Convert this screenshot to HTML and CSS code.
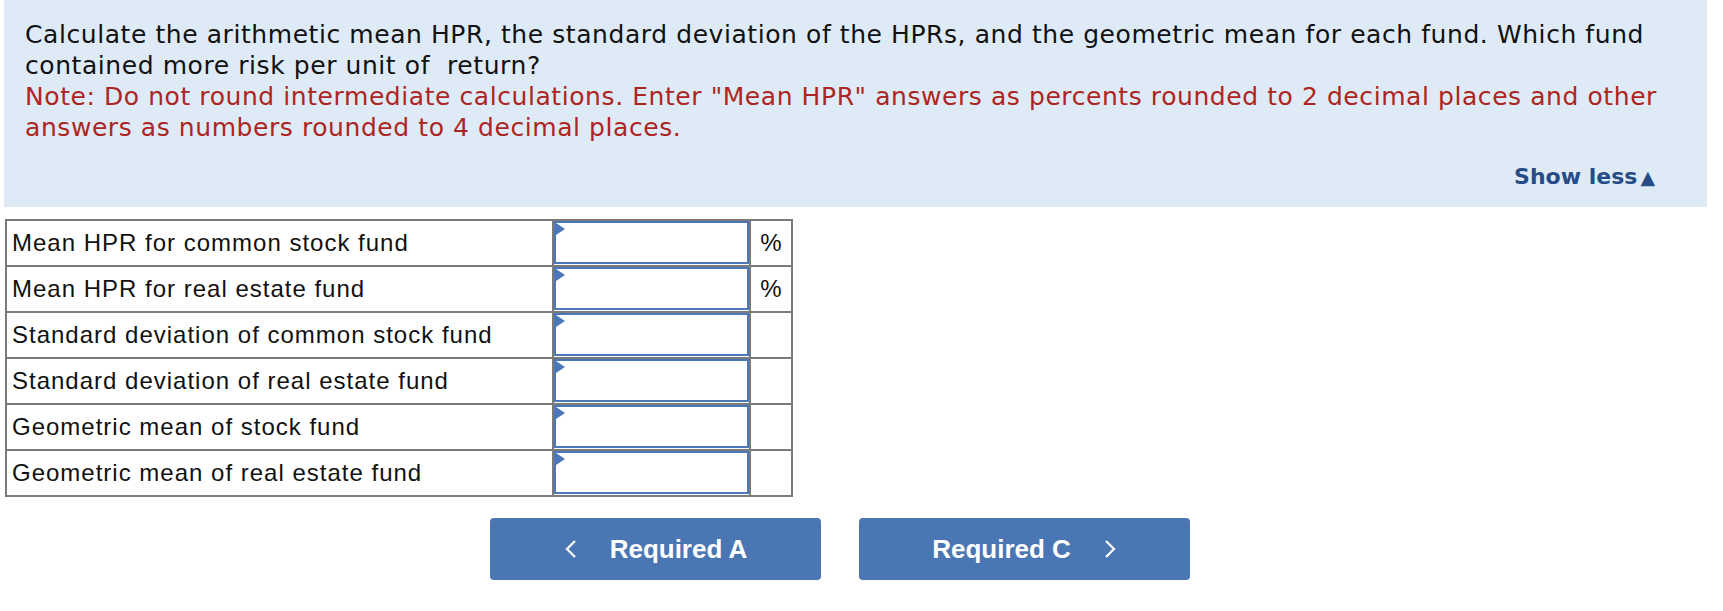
FILE: index.html
```html
<!DOCTYPE html>
<html lang="en">
<head>
    <meta charset="UTF-8">
    <meta name="viewport" content="width=device-width, initial-scale=1.0">
    <title>Required B</title>
    <link rel="stylesheet" href="styles.css">
</head>
<body>
    <div class="wrap">
        <div class="question">
            <p class="prompt">Calculate the arithmetic mean HPR, the standard deviation of the HPRs, and the geometric mean for each fund. Which fund contained more risk per unit of&nbsp; return?</p>
            <p class="note">Note: Do not round intermediate calculations. Enter "Mean HPR" answers as percents rounded to 2 decimal places and other answers as numbers rounded to 4 decimal places.</p>
            <div class="toggle"><a href="#">Show less<span class="arrow">&#9650;</span></a></div>
        </div>

        <table class="answers">
            <tr>
                <td class="label">Mean HPR for common stock fund</td>
                <td class="entry"><span class="flag"></span><input type="text"></td>
                <td class="unit">%</td>
            </tr>
            <tr>
                <td class="label">Mean HPR for real estate fund</td>
                <td class="entry"><span class="flag"></span><input type="text"></td>
                <td class="unit">%</td>
            </tr>
            <tr>
                <td class="label">Standard deviation of common stock fund</td>
                <td class="entry"><span class="flag"></span><input type="text"></td>
                <td class="unit"></td>
            </tr>
            <tr>
                <td class="label">Standard deviation of real estate fund</td>
                <td class="entry"><span class="flag"></span><input type="text"></td>
                <td class="unit"></td>
            </tr>
            <tr>
                <td class="label">Geometric mean of stock fund</td>
                <td class="entry"><span class="flag"></span><input type="text"></td>
                <td class="unit"></td>
            </tr>
            <tr>
                <td class="label">Geometric mean of real estate fund</td>
                <td class="entry"><span class="flag"></span><input type="text"></td>
                <td class="unit"></td>
            </tr>
        </table>

        <div class="nav">
            <button class="nav-btn">
                <svg width="14" height="18" viewBox="0 0 14 18"><polyline points="11,1 3,9 11,17" fill="none" stroke="white" stroke-width="2.2"/></svg>
                <span>Required A</span>
            </button>
            <button class="nav-btn">
                <span>Required C</span>
                <svg width="14" height="18" viewBox="0 0 14 18"><polyline points="3,1 11,9 3,17" fill="none" stroke="white" stroke-width="2.2"/></svg>
            </button>
        </div>
    </div>
</body>
</html>
```

FILE: styles.css
```css
body {
    margin: 0;
    padding: 0;
    background-color: #fff;
}

.wrap {
    padding: 0 16px 0 4px;
}

.question {
    background-color: #deebf7;
    height: 207px;
    box-sizing: border-box;
    padding: 19px 25px 0 21px;
    font-family: "DejaVu Sans", Verdana, sans-serif;
    font-size: 25px;
    letter-spacing: 0.57px;
    line-height: 31px;
}

.question p {
    margin: 0;
}

.prompt {
    color: #111;
}

.note {
    color: #ad2522;
}

.toggle {
    text-align: right;
    margin-top: 17px;
    padding-right: 27px;
    letter-spacing: 0;
}

.toggle a {
    color: #264b87;
    font-weight: bold;
    font-size: 22px;
    text-decoration: none;
}

.toggle .arrow {
    margin-left: 3px;
    font-size: 19px;
}

.answers {
    margin: 12px 0 0 1px;
    border-collapse: collapse;
    font-family: "Liberation Sans", Arial, sans-serif;
    font-size: 24px;
    letter-spacing: 1px;
    color: #111;
}

.answers td {
    border: 2px solid #7a7a7a;
    height: 44px;
    padding: 0;
}

.label {
    width: 540px;
    padding: 0 0 0 5px !important;
}

.entry {
    width: 195px;
    position: relative;
    vertical-align: top;
}

.entry input {
    display: block;
    width: 195px;
    height: 43px;
    box-sizing: border-box;
    border: 2px solid #4a78b8;
    margin: 0;
    padding: 0 8px;
    font-size: 20px;
    outline: none;
}

.flag {
    position: absolute;
    top: 2px;
    left: 2px;
    width: 0;
    height: 0;
    border-left: 9px solid #4a78b8;
    border-top: 6px solid transparent;
    border-bottom: 6px solid transparent;
}

.unit {
    width: 40px;
    text-align: center;
    letter-spacing: 0;
    font-size: 24px;
}

.nav {
    width: 1672px;
    margin: 21px 0 0 0;
    display: flex;
    justify-content: center;
    gap: 38px;
}

.nav-btn {
    width: 331px;
    height: 62px;
    background-color: #4a76b4;
    border: none;
    border-radius: 4px;
    color: white;
    font-family: "Liberation Sans", Arial, sans-serif;
    font-weight: bold;
    font-size: 26px;
    display: flex;
    align-items: center;
    justify-content: center;
    gap: 32px;
    cursor: pointer;
}
```
